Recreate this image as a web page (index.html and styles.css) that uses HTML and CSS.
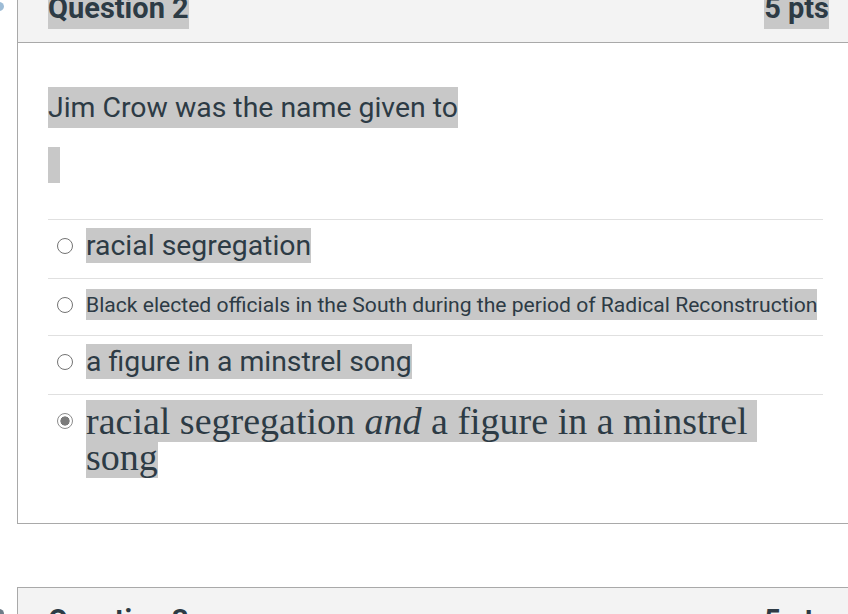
FILE: index.html
```html
<!DOCTYPE html>
<html lang="en">
<head>
<meta charset="utf-8">
<title>Question 2</title>
<link rel="stylesheet" href="styles.css">
</head>
<body>
<div class="page">
  <div class="question-card question-card--first">
    <span class="side-flag side-flag--blue"></span>
    <div class="q-header">
      <span class="sel">Question 2</span>
      <span class="sel">5 pts</span>
    </div>
    <div class="q-body">
      <p class="q-text"><span class="sel">Jim Crow was the name given to</span></p>
      <div class="q-blank"></div>
      <div class="answers">
        <div class="answer answer--lg">
          <span class="radio"></span>
          <span class="answer-text"><span class="sel">racial segregation</span></span>
        </div>
        <div class="answer answer--sm">
          <span class="radio"></span>
          <span class="answer-text"><span class="sel">Black elected officials in the South during the period of Radical Reconstruction</span></span>
        </div>
        <div class="answer answer--lg">
          <span class="radio"></span>
          <span class="answer-text"><span class="sel">a figure in a minstrel song</span></span>
        </div>
        <div class="answer answer--serif">
          <span class="radio-box"><span class="radio radio--checked"></span></span>
          <span class="answer-text"><span class="sel">racial segregation <em>and</em> a figure in a minstrel&nbsp;<br>song</span></span>
        </div>
      </div>
    </div>
  </div>

  <div class="question-card question-card--next">
    <span class="side-flag side-flag--grey"></span>
    <div class="q-header">
      <span>Question 3</span>
      <span>5 pts</span>
    </div>
  </div>
</div>
</body>
</html>
```

FILE: styles.css
```css
html, body {
  margin: 0;
  padding: 0;
  overflow: hidden;
  background: #ffffff;
}

body {
  font-family: Roboto, "Noto Sans", "Liberation Sans", sans-serif;
  color: #2d3b45;
}

.page {
  padding-left: 17px;
  overflow: hidden;
  height: 614px;
}

.question-card {
  position: relative;
  border: 1px solid #a9a9a9;
  margin-right: -7px;
  background: #ffffff;
}

.question-card--first {
  margin-top: -25px;
}

.question-card--next {
  margin-top: 63px;
}

.side-flag {
  position: absolute;
  left: -24px;
  width: 10px;
  height: 9px;
  border-radius: 50%;
}

.side-flag--blue {
  top: 26px;
  background: #9dbcd6;
}

.side-flag--grey {
  top: 21px;
  background: #6e7c88;
}

.q-header {
  display: flex;
  justify-content: space-between;
  align-items: flex-start;
  background: #f3f3f3;
  border-bottom: 1px solid #a9a9a9;
  padding: 11px 25px 13px 30px;
  font-weight: 700;
  font-size: 29px;
  line-height: 42px;
}

.sel {
  background: #c8c8c8;
}

.q-body {
  padding: 44px 31px 33px 30px;
}

.q-text {
  margin: 0;
  font-size: 28.4px;
  line-height: 42px;
}

.q-text .sel {
  padding: 4.4px 0;
}

.q-blank {
  margin-top: 18px;
  width: 12px;
  height: 36px;
  background: #c8c8c8;
}

.answers {
  margin-top: 36px;
}

.answer {
  display: flex;
  align-items: center;
  border-top: 1px solid #e0e0e0;
  padding: 8px 0 15px 9px;
}

.radio {
  flex: none;
  box-sizing: border-box;
  width: 16px;
  height: 16px;
  border: 1.3px solid #737373;
  border-radius: 50%;
  margin-right: 13px;
  background: #ffffff;
}

.radio-box {
  flex: none;
  display: flex;
  align-items: center;
  height: 36px;
}

.radio--checked {
  border-color: #8c8c8c;
  background: radial-gradient(circle, #7b7b7b 0, #7b7b7b 4.3px, #ffffff 4.9px);
}

.answer--lg .answer-text {
  font-size: 28.4px;
  line-height: 35px;
}

.answer--lg .sel {
  padding: 0.9px 0;
}

.answer--sm {
  padding-top: 11px;
}

.answer--sm .answer-text {
  font-size: 21.1px;
  line-height: 30px;
}

.answer--sm .sel {
  padding: 2.6px 0;
}

.answer--serif {
  align-items: flex-start;
  padding-bottom: 15px;
}

.answer--serif .answer-text {
  font-family: "Liberation Serif", "DejaVu Serif", serif;
  font-size: 38px;
  line-height: 36px;
}

.answer--serif em {
  font-style: italic;
}
```
